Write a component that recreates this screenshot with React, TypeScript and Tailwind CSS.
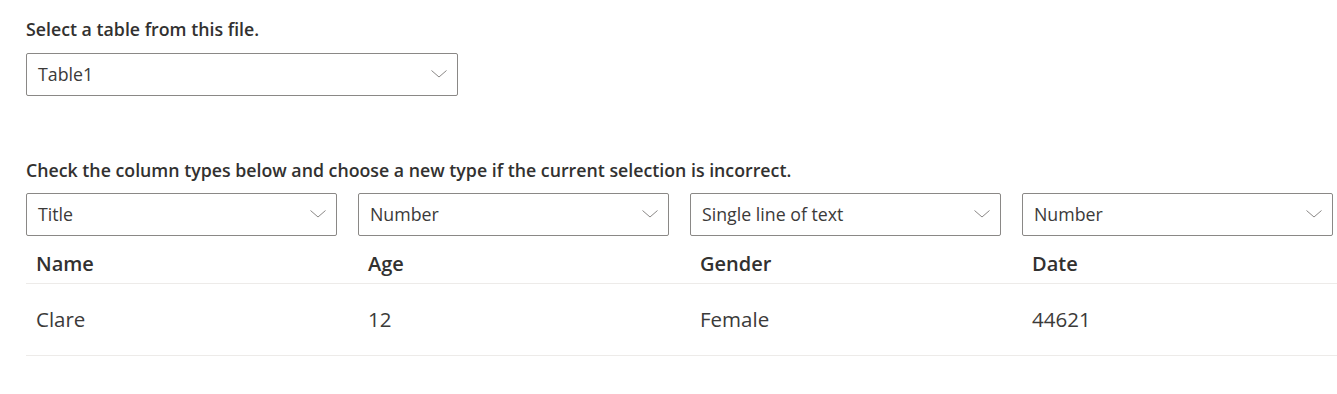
import type { ReactNode } from 'react';

const columns = [
  { type: 'Title', name: 'Name', value: 'Clare' },
  { type: 'Number', name: 'Age', value: '12' },
  { type: 'Single line of text', name: 'Gender', value: 'Female' },
  { type: 'Number', name: 'Date', value: '44621' },
];

function Chevron() {
  return (
    <svg width="16" height="8" viewBox="0 0 16 8" fill="none" className="shrink-0">
      <polyline points="0.5,0.5 8,7 15.5,0.5" stroke="#8a8886" strokeWidth="1" />
    </svg>
  );
}

function Dropdown({ value, className }: { value: string; className?: string }) {
  return (
    <div
      className={`flex h-[43px] items-center justify-between rounded-[2px] border border-[#8a8886] bg-white pb-[2px] pl-[11px] pr-[10px] ${className ?? ''}`}
    >
      <span className="text-[17.75px] leading-[24px] text-[#3b3a39]">{value}</span>
      <Chevron />
    </div>
  );
}

function Label({ children, className }: { children: ReactNode; className?: string }) {
  return (
    <p className={`h-[24px] text-[17.75px] font-semibold leading-[24px] text-[#323130] ${className ?? ''}`}>
      {children}
    </p>
  );
}

export default function App() {
  return (
    <div
      className="flex h-[394px] w-[1337px] flex-col overflow-hidden bg-white pl-[26px] pt-[17px]"
      style={{ fontFamily: '"Open Sans", "Noto Sans", sans-serif' }}
    >
      <Label>Select a table from this file.</Label>
      <Dropdown value="Table1" className="mt-[12px] w-[432px]" />

      <Label className="mt-[62px]">
        Check the column types below and choose a new type if the current selection is incorrect.
      </Label>
      <div className="mt-[11px] grid grid-cols-[311px_311px_311px_311px] gap-x-[21px]">
        {columns.map((col, i) => (
          <Dropdown key={i} value={col.type} />
        ))}
      </div>

      <div className="grid h-[48px] grid-cols-[332px_332px_332px_1fr] border-b border-[#edebe9]">
        {columns.map((col, i) => (
          <div key={i} className="flex items-end pb-[5px] pl-[10px]">
            <span className="text-[20px] font-semibold leading-[28px] text-[#323130]">{col.name}</span>
          </div>
        ))}
      </div>
      <div className="grid h-[72px] grid-cols-[332px_332px_332px_1fr] border-b border-[#edebe9]">
        {columns.map((col, i) => (
          <div key={i} className="flex items-center pb-[1px] pl-[10px]">
            <span className="text-[20.5px] leading-[28px] text-[#3b3a39]">{col.value}</span>
          </div>
        ))}
      </div>
    </div>
  );
}
